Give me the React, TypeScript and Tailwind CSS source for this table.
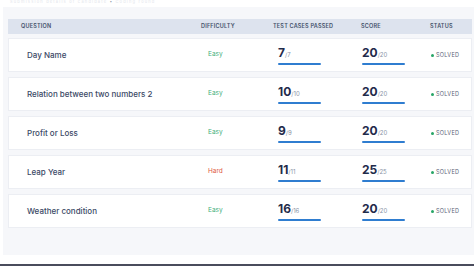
import React from "react";

type Row = { name: string; diff: "Easy" | "Hard"; passed: number; total: number; score: number; max: number };

const rows: Row[] = [
  { name: "Day Name", diff: "Easy", passed: 7, total: 7, score: 20, max: 20 },
  { name: "Relation between two numbers 2", diff: "Easy", passed: 10, total: 10, score: 20, max: 20 },
  { name: "Profit or Loss", diff: "Easy", passed: 9, total: 9, score: 20, max: 20 },
  { name: "Leap Year", diff: "Hard", passed: 11, total: 11, score: 25, max: 25 },
  { name: "Weather condition", diff: "Easy", passed: 16, total: 16, score: 20, max: 20 },
];

function Metric({ value, total }: { value: number; total: number }) {
  return (
    <div className="flex flex-col w-[43px]">
      <div className="flex items-baseline leading-none">
        <span className="text-[12px] font-bold text-[#1f2b4b]">{value}</span>
        <span className="text-[6px] text-[#8a93a6]">/{total}</span>
      </div>
      <div className="mt-[4px] h-[2px] w-[43px] bg-[#2f7dd0] rounded-full" />
    </div>
  );
}

export default function App() {
  return (
    <div
      className="w-[474px] h-[266px] bg-white flex flex-col overflow-hidden"
      style={{ fontFamily: "Inter, 'Noto Sans', sans-serif" }}
    >
      <div className="h-[7px] pl-[10px] flex items-start">
        <div className="text-[4px] leading-[4px] tracking-[1.2px] text-[#e3e6ec] whitespace-nowrap">
          Submission details of candidate <span className="text-[#8f96a4]">•</span> Coding round
        </div>
      </div>
      <div className="h-[248px] ml-[3px] bg-[#f6f7fa] pt-[12px] pl-[5px] pr-[2px] flex flex-col">
        <div className="h-[15px] bg-[#dde3ee] grid grid-cols-[193px_72px_88px_69px_1fr] items-center text-[5.5px] font-semibold tracking-[0.2px] text-[#44516b] uppercase">
          <div className="pl-[13px]">Question</div>
          <div>Difficulty</div>
          <div>Test Cases Passed</div>
          <div>Score</div>
          <div>Status</div>
        </div>
        <div className="mt-[4px] flex flex-col gap-[5px]">
          {rows.map((r) => (
            <div
              key={r.name}
              className="h-[34px] bg-white border border-[#eceef3] grid grid-cols-[199px_70px_84px_69px_1fr] items-center"
            >
              <div className="pl-[18px] text-[8px] font-medium text-[#3b4966]">{r.name}</div>
              <div
                className={
                  r.diff === "Easy"
                    ? "text-[6.5px] text-[#3fb07c]"
                    : "text-[6.5px] text-[#e0583f]"
                }
              >
                {r.diff}
              </div>
              <div className="pt-[2px]">
                <Metric value={r.passed} total={r.total} />
              </div>
              <div className="pt-[2px]">
                <Metric value={r.score} total={r.max} />
              </div>
              <div className="flex items-center gap-[2px] text-[5.5px] tracking-[0.3px] text-[#5b6478]">
                <span className="w-[3px] h-[3px] rounded-full bg-[#27a566]" />
                SOLVED
              </div>
            </div>
          ))}
        </div>
      </div>
      <div className="h-[9px]" />
      <div className="h-[2px] bg-[#4a4c5c]" />
    </div>
  );
}
